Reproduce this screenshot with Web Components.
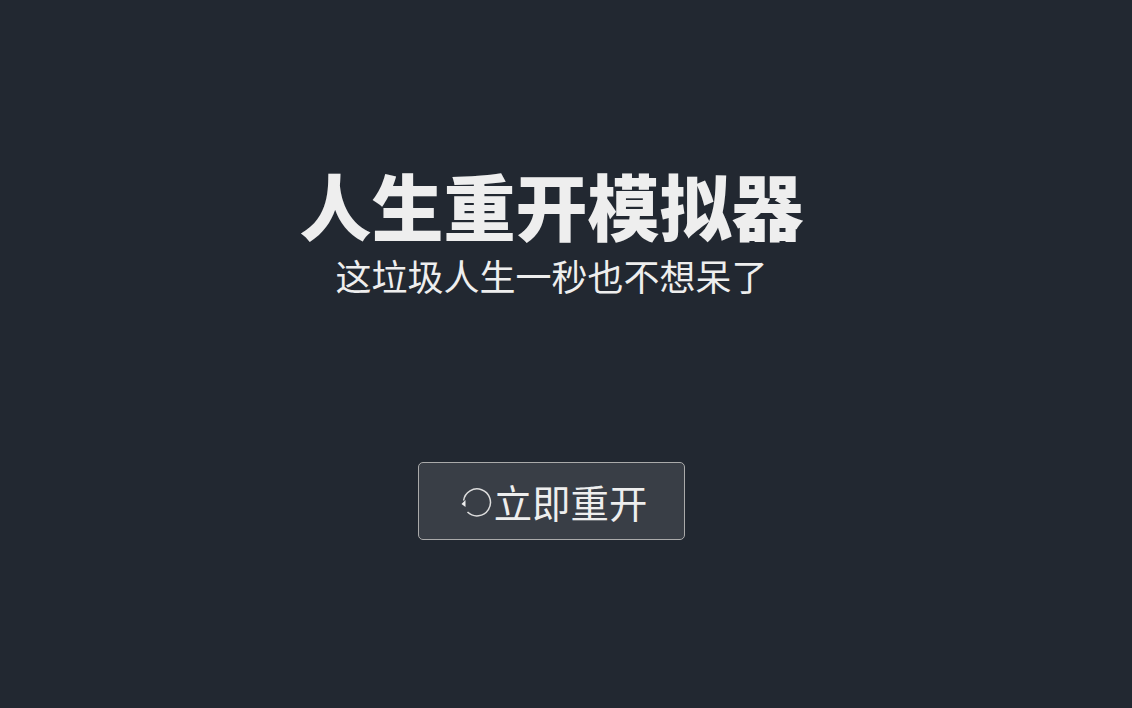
<!DOCTYPE html>
<html lang="zh">
<head>
<meta charset="utf-8">
<style>
html, body { margin: 0; height: 100%; background: #222831; }
</style>
</head>
<body>
<restart-page>
  <span slot="title">人生重开模拟器</span>
  <span slot="subtitle">这垃圾人生一秒也不想呆了</span>
  <restart-button>立即重开</restart-button>
</restart-page>
<script>
class RestartPage extends HTMLElement {
    constructor() {
        super();
        this.attachShadow({ mode: 'open' });
        this.shadowRoot.innerHTML = `
        <style>
            :host {
                display: flex;
                flex-direction: column;
                align-items: center;
                height: 708px;
                padding-top: 168px;
                padding-right: 29px;
                box-sizing: border-box;
                font-family: "Liberation Sans", "Noto Sans CJK SC", sans-serif;
                color: #eeeeee;
            }
            .title { font-size: 72px; font-weight: 900; line-height: 84px; }
            .subtitle { font-size: 36px; line-height: 42px; margin-top: 6px; }
            .actions { margin-top: 162px; }
        </style>
        <div class="title"><slot name="title"></slot></div>
        <div class="subtitle"><slot name="subtitle"></slot></div>
        <div class="actions"><slot></slot></div>
        `;
    }
}

class RestartButton extends HTMLElement {
    constructor() {
        super();
        this.attachShadow({ mode: 'open' });
        this.shadowRoot.innerHTML = `
        <style>
            :host {
                display: flex;
                align-items: center;
                justify-content: center;
                box-sizing: border-box;
                width: 267px;
                height: 78px;
                border: 1px solid #aaaaaa;
                border-radius: 5px;
                background: #393e46;
                color: #eeeeee;
                font-size: 38.4px;
            }
            svg { width: 38px; height: 38px; flex: none; }
        </style>
        <svg viewBox="0 0 38 38" fill="none" stroke="#dddddd" stroke-width="1.5">
            <path d="M7.6 18.5 A13.5 13.5 0 1 1 11.5 30" />
            <path d="M9.5 18 L9.5 25 L5.5 22 Z" fill="#eeeeee" stroke="none" />
        </svg>
        <slot></slot>
        `;
    }
}

customElements.define('restart-page', RestartPage);
customElements.define('restart-button', RestartButton);
</script>
</body>
</html>
